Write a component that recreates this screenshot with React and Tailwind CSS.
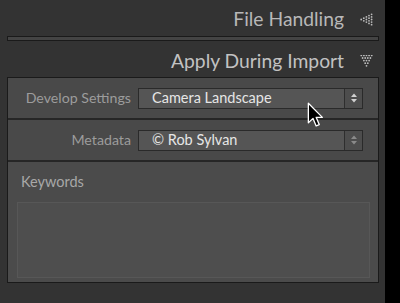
import React from 'react';

const font = { fontFamily: 'Lato, "Noto Sans", sans-serif' };

const DotTriangle = ({ down }) => {
  const dots = [];
  for (let i = 0; i < 5; i++) {
    for (let j = 0; j <= i; j++) {
      const a = 1.2 + i * 2.6;
      const b = 6.5 + (j - i / 2) * 2.6;
      dots.push(down ? { x: b, y: 12 - a } : { x: a, y: b });
    }
  }
  return (
    <svg width="13" height="13" viewBox="0 0 13 13" className="shrink-0">
      {dots.map((d, k) => (
        <circle key={k} cx={d.x} cy={d.y} r="0.9" fill="#bcbcbc" />
      ))}
    </svg>
  );
};

const Stepper = ({ dim }) => (
  <div className="w-[18px] h-full border-l border-[#2e2e2e] bg-[#4d4d4d] flex items-center justify-center">
    <svg width="8" height="12" viewBox="0 0 8 12">
      <path d="M1 5 L4 1.5 L7 5 Z" fill={dim ? '#8a8a8a' : '#d0d0d0'} />
      <path d="M1 7 L4 10.5 L7 7 Z" fill={dim ? '#8a8a8a' : '#d0d0d0'} />
    </svg>
  </div>
);

const Row = ({ label, value, dim }) => (
  <div className="h-[42px] flex items-center bg-[#494949] border-b-2 border-[#262626]">
    <div className="w-[123px] text-right text-[14.2px] text-[#9c9c9c]">{label}</div>
    <div className="ml-[7px] w-[225px] h-[21px] flex items-center justify-between bg-[#555555] border border-[#2a2a2a]">
      <span className="pl-[13px] text-[14.5px] text-[#e6e6e6] leading-none">{value}</span>
      <Stepper dim={dim} />
    </div>
  </div>
);

export default function App() {
  return (
    <div className="w-[400px] h-[303px] flex overflow-hidden" style={font}>
      <div className="relative w-[385px] h-full bg-[#333333] flex flex-col">
        {/* File Handling (collapsed) */}
        <div className="h-[36px] shrink-0 flex items-center justify-end pr-[12px] pt-[2px] gap-[16px]">
          <span className="text-[19.3px] text-[#b8b8b8] leading-none">File Handling</span>
          <DotTriangle />
        </div>
        <div className="ml-[7px] mr-[6px] h-[5px] shrink-0 border border-[#1a1a1a] bg-[#444444]" />

        {/* Apply During Import */}
        <div className="h-[36px] shrink-0 flex items-center justify-end pr-[12px] pt-[4px] gap-[16px]">
          <span className="text-[19.3px] text-[#c2c2c2] leading-none">Apply During Import</span>
          <DotTriangle down />
        </div>

        <div className="ml-[7px] mr-[6px] shrink-0 border border-[#1a1a1a] flex flex-col">
          <Row label="Develop Settings" value="Camera Landscape" />
          <Row label="Metadata" value="© Rob Sylvan" dim />
          <div className="h-[120px] bg-[#4b4b4b] flex flex-col pl-[9px] pr-[8px]">
            <div className="pt-[13px] pl-[4px] text-[14.5px] text-[#a8a8a8] leading-none">Keywords</div>
            <div className="mt-[12px] h-[76px] bg-[#4e4e4e] border border-[#575757]" />
          </div>
        </div>

        {/* mouse pointer */}
        <svg
          className="absolute left-[307px] top-[102px]"
          width="17"
          height="26"
          viewBox="0 0 13 20"
        >
          <path
            d="M1 1 L1 16 L4.6 12.6 L7 18.4 L9.4 17.4 L7 11.8 L11.8 11.8 Z"
            fill="#000"
            stroke="#fff"
            strokeWidth="1"
            strokeLinejoin="round"
          />
        </svg>
      </div>
      <div className="w-[15px] h-full bg-black" />
    </div>
  );
}
